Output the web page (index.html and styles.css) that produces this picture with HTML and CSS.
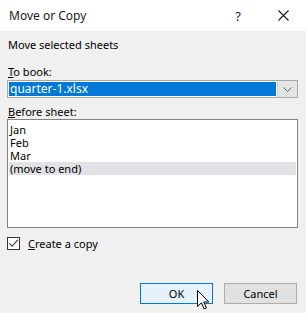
FILE: index.html
```html
<!DOCTYPE html>
<html>
<head>
<meta charset="utf-8">
<link rel="stylesheet" href="styles.css">
</head>
<body>
<div class="dialog">
  <div class="titlebar">
    <span class="title">Move or Copy</span>
    <span class="help">?</span>
    <svg class="close" width="11" height="11" viewBox="0 0 11 11"><path d="M0.5 0.5 L10.5 10.5 M10.5 0.5 L0.5 10.5" stroke="#1a1a1a" stroke-width="1.1" fill="none"/></svg>
  </div>
  <div class="content">
    <div class="label first">Move selected sheets</div>
    <div class="label gap"><u>T</u>o book:</div>
    <div class="combo">
      <div class="combo-value">quarter-1.xlsx</div>
      <div class="combo-btn">
        <svg width="9" height="5" viewBox="0 0 9 5"><path d="M0.5 0.5 L4.5 4.5 L8.5 0.5" stroke="#606060" stroke-width="1" fill="none"/></svg>
      </div>
    </div>
    <div class="label gap2"><u>B</u>efore sheet:</div>
    <div class="listbox">
      <div class="item">Jan</div>
      <div class="item">Feb</div>
      <div class="item">Mar</div>
      <div class="item selected">(move to end)</div>
    </div>
    <div class="check-row">
      <span class="checkbox">
        <svg width="11" height="11" viewBox="0 0 11 11"><path d="M1.5 5.5 L4.2 8.3 L9.8 1.8" stroke="#333" stroke-width="1.1" fill="none"/></svg>
      </span>
      <span class="check-label"><u>C</u>reate a copy</span>
    </div>
    <div class="buttons">
      <div class="btn default">OK</div>
      <div class="btn">Cancel</div>
    </div>
  </div>
  <svg class="cursor" width="13" height="20" viewBox="0 0 13 20"><path d="M0.5 0.5 L0.5 16.5 L4.5 12.8 L7.2 19 L9.4 18 L6.8 12 L11.8 12 Z" fill="#fff" stroke="#000" stroke-width="1" stroke-linejoin="miter"/></svg>
</div>
</body>
</html>
```
FILE: styles.css
```css
html, body {
  margin: 0;
  padding: 0;
}
body {
  width: 306px;
  height: 313px;
  overflow: hidden;
  background: #f0f0f0;
  font-family: "Segoe UI", "Noto Sans", "Open Sans", sans-serif;
  font-size: 11px;
  color: #000;
}
.dialog {
  position: relative;
  width: 306px;
  height: 313px;
  background: #f0f0f0;
}
.titlebar {
  height: 31px;
  background: #fff;
  display: flex;
  align-items: center;
  padding-left: 9px;
}
.title {
  flex: 1;
  font-size: 12px;
  color: #1a1a1a;
}
.help {
  font-size: 13px;
  color: #1a1a1a;
  margin-right: 37px;
}
.close {
  margin-right: 17px;
}
.content {
  padding: 0 8px 0 7px;
}
.label {
  line-height: 15px;
  height: 15px;
  padding-left: 1px;
  white-space: nowrap;
}
.label.first { margin-top: 6px; }
.label.gap { margin-top: 12px; }
.label.gap2 { margin-top: 6px; }
u { text-decoration: underline; text-underline-offset: 1px; }
.combo {
  margin-top: 1px;
  height: 18px;
  box-sizing: border-box;
  border: 1px solid #a9a9a9;
  display: flex;
  background: #fff;
}
.combo-value {
  flex: 1;
  margin: 1px;
  background: #0078d7;
  color: #fff;
  line-height: 14px;
  padding-left: 1px;
  font-size: 12px;
}
.combo-btn {
  width: 19px;
  background: #e5e5e5;
  border-left: 1px solid #cfcfcf;
  display: flex;
  align-items: center;
  justify-content: center;
}
.listbox {
  margin-top: 0;
  height: 109px;
  box-sizing: border-box;
  border: 1px solid #828282;
  background: #fff;
  padding: 3px 1px 0 1px;
}
.item {
  height: 13px;
  line-height: 13px;
  padding-left: 1px;
  white-space: nowrap;
}
.item.selected {
  background: #e1e1e6;
}
.check-row {
  margin-top: 8px;
  height: 15px;
  display: flex;
  align-items: center;
}
.checkbox {
  width: 13px;
  height: 13px;
  box-sizing: border-box;
  border: 1px solid #333;
  background: #fff;
  display: flex;
  align-items: center;
  justify-content: center;
}
.check-label {
  margin-left: 8px;
  line-height: 15px;
}
.buttons {
  margin-top: 32px;
  display: flex;
  justify-content: flex-end;
  gap: 11px;
  padding-right: 1px;
}
.btn {
  width: 73px;
  height: 21px;
  box-sizing: border-box;
  border: 1px solid #adadad;
  background: #e1e1e1;
  display: flex;
  align-items: center;
  justify-content: center;
  line-height: 15px;
}
.btn.default {
  border-color: #0078d7;
  background: #e5f1fb;
}
.cursor {
  position: absolute;
  left: 197px;
  top: 290px;
}
```
